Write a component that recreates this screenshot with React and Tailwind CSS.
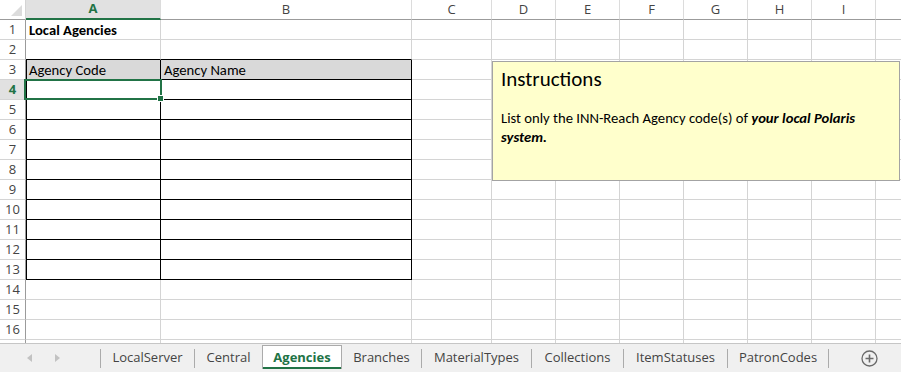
import { Fragment } from "react";

const COLS = [
  { key: "A", w: "w-[135px]" },
  { key: "B", w: "w-[251px]" },
  { key: "C", w: "w-[80px]" },
  { key: "D", w: "w-[64px]" },
  { key: "E", w: "w-[64px]" },
  { key: "F", w: "w-[64px]" },
  { key: "G", w: "w-[64px]" },
  { key: "H", w: "w-[64px]" },
  { key: "I", w: "w-[64px]" },
];

const TABS = [
  { name: "LocalServer", w: "w-[93px]" },
  { name: "Central", w: "w-[67px]" },
  { name: "Agencies", w: "w-[80px]", active: true },
  { name: "Branches", w: "w-[79px]" },
  { name: "MaterialTypes", w: "w-[109px]" },
  { name: "Collections", w: "w-[91px]" },
  { name: "ItemStatuses", w: "w-[103px]" },
  { name: "PatronCodes", w: "w-[100px]" },
];

const cellFont = "font-['Carlito','Liberation_Sans',sans-serif] text-[14.67px] leading-[18px] text-black";
const uiFont = "font-['Open_Sans','Noto_Sans',sans-serif]";

function inTable(row, col) {
  return row >= 3 && row <= 13 && (col === "A" || col === "B");
}

function Cell({ row, col, w }) {
  const table = inTable(row, col);
  const topEdge = row === 2 && (col === "A" || col === "B");
  return (
    <div
      className={[
        "h-full shrink-0 border-r border-b flex items-end pl-[3px] overflow-hidden whitespace-nowrap",
        w,
        table || topEdge ? "border-b-black" : "border-b-[#d4d4d4]",
        table ? "border-r-black" : "border-r-[#d4d4d4]",
        table && col === "A" ? "shadow-[inset_1px_0_0_#000]" : "",
        row === 3 && table ? "bg-[#d9d9d9]" : "bg-white",
        cellFont,
      ].join(" ")}
    >
      {row === 1 && col === "A" && <span className="font-bold">Local Agencies</span>}
      {row === 3 && col === "A" && "Agency Code"}
      {row === 3 && col === "B" && "Agency Name"}
    </div>
  );
}

function HeaderRow() {
  return (
    <div className="flex h-[20px] shrink-0">
      <div className="relative w-[26px] h-full shrink-0 border-r border-b border-r-[#d4d4d4] border-b-[#9b9b9b] bg-white">
        <svg className="absolute right-[3px] bottom-[3px]" width="11" height="11" viewBox="0 0 11 11">
          <polygon points="11,0 11,11 0,11" fill="#dcdcdc" />
        </svg>
      </div>
      {COLS.map((c) => (
        <div
          key={c.key}
          className={[
            "h-full shrink-0 border-r border-r-[#dcdcdc] flex items-center justify-center text-[13px]",
            uiFont,
            c.w,
            c.key === "A"
              ? "bg-[#e1e1e1] border-b-2 border-b-[#217346] text-[#217346] font-bold"
              : "bg-white border-b border-b-[#9b9b9b] text-[#444]",
          ].join(" ")}
        >
          {c.key}
        </div>
      ))}
      <div className="flex-1 h-full border-b border-b-[#9b9b9b] bg-white" />
    </div>
  );
}

function Row({ n }) {
  const sel = n === 4;
  return (
    <div className="flex h-[20px] shrink-0">
      <div
        className={[
          "w-[26px] h-full shrink-0 border-r border-b border-r-[#9b9b9b] border-b-[#d4d4d4] flex items-center justify-center text-[13px] pt-px",
          uiFont,
          sel ? "bg-[#e1e1e1] text-[#217346] font-bold" : "bg-white text-[#444]",
        ].join(" ")}
      >
        {n <= 16 ? n : ""}
      </div>
      {COLS.map((c) => (
        <Cell key={c.key} row={n} col={c.key} w={c.w} />
      ))}
      <div className="flex-1 h-full border-b border-b-[#d4d4d4] bg-white" />
    </div>
  );
}

function Sep() {
  return <div className="w-px h-[19px] bg-[#ababab] shrink-0 self-center" />;
}

function TabBar() {
  return (
    <div className={"flex h-[29px] shrink-0 border-t border-[#c6c6c6] bg-[#f0f0f0] " + uiFont}>
      <div className="w-[100px] shrink-0 flex items-center">
        <svg className="ml-[27px]" width="5" height="8" viewBox="0 0 5 8">
          <polygon points="5,0 5,8 0,4" fill="#c2c2c2" />
        </svg>
        <svg className="ml-[23px]" width="5" height="8" viewBox="0 0 5 8">
          <polygon points="0,0 0,8 5,4" fill="#c2c2c2" />
        </svg>
      </div>
      {TABS.map((t, i) => {
        const prevActive = i > 0 && TABS[i - 1].active;
        return (
          <Fragment key={t.name}>
            {!t.active && !prevActive && <Sep />}
            {t.active ? (
              <div
                className={
                  "shrink-0 mt-px mb-[3px] border-x border-t border-[#ababab] bg-white relative flex items-center justify-center text-[13px] font-bold text-[#217346] " +
                  t.w
                }
              >
                {t.name}
                <div className="absolute left-0 right-0 bottom-0 h-[2px] bg-[#217346]" />
              </div>
            ) : (
              <div
                className={
                  "shrink-0 flex items-center justify-center text-[13px] text-[#444] " + t.w
                }
              >
                {t.name}
              </div>
            )}
          </Fragment>
        );
      })}
      <Sep />
      <div className="w-[80px] shrink-0 flex items-center justify-center">
        <svg width="17" height="17" viewBox="0 0 17 17" fill="none" stroke="#6a6a6a" strokeWidth="1.3">
          <circle cx="8.5" cy="8.5" r="7.5" />
          <path d="M8.5 4.5v8M4.5 8.5h8" strokeWidth="1.6" />
        </svg>
      </div>
    </div>
  );
}

export default function App() {
  const rows = Array.from({ length: 17 }, (_, i) => i + 1);
  return (
    <div className="w-[901px] h-[372px] flex flex-col bg-white overflow-hidden">
      <div className="relative flex-1 overflow-hidden flex flex-col">
        <HeaderRow />
        {rows.map((n) => (
          <Row key={n} n={n} />
        ))}

        {/* selected cell A4 */}
        <div className="absolute left-[24px] top-[79px] w-[138px] h-[21px] border-2 border-[#217346]" />
        <div className="absolute left-[157px] top-[95px] w-[7px] h-[7px] bg-[#217346] border border-white" />

        {/* instructions shape */}
        <div className="absolute left-[492px] top-[61px] w-[408px] h-[120px] border border-[#a3a3a3] bg-[#ffffcc] px-[8px] font-['Carlito','Liberation_Sans',sans-serif] text-black">
          <div className="text-[21px] leading-[26px] mt-[4px]">Instructions</div>
          <div className="text-[14.67px] leading-[19px] mt-[17px]">
            List only the INN-Reach Agency code(s) of <span className="font-bold italic">your local Polaris</span>
            <br />
            <span className="font-bold italic">system.</span>
          </div>
        </div>
      </div>
      <TabBar />
    </div>
  );
}
